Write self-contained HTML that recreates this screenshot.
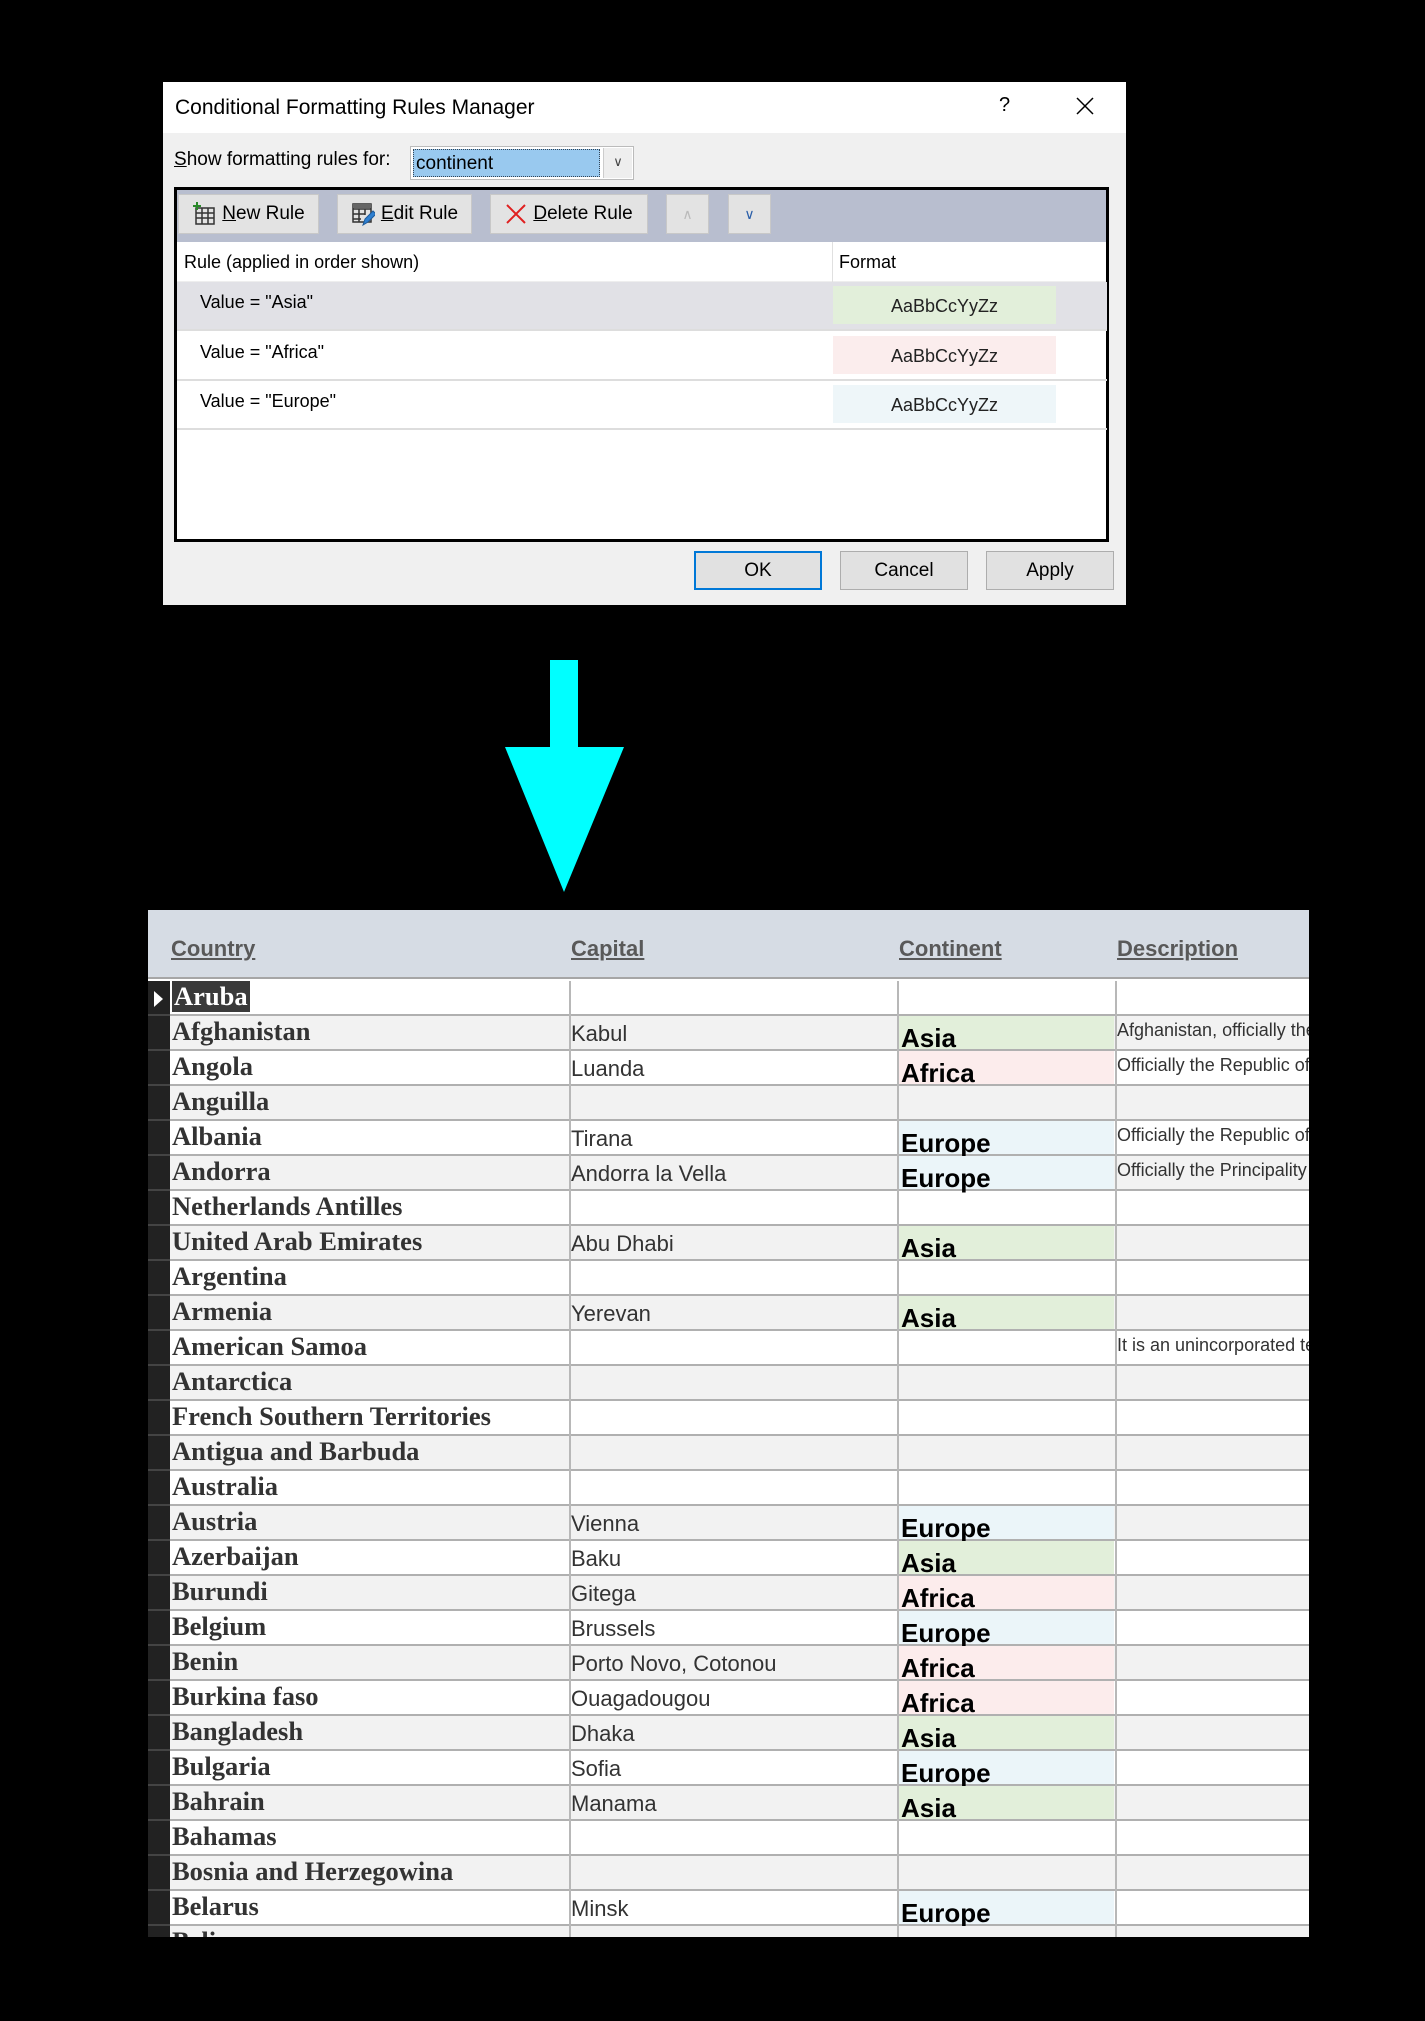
<!DOCTYPE html>
<html><head><meta charset="utf-8"><style>
*{margin:0;padding:0;box-sizing:border-box}
body{width:1425px;height:2021px;background:#000;position:relative;overflow:hidden;font-family:"Liberation Sans",sans-serif}
.abs{position:absolute}
#dlg{left:163px;top:82px;width:963px;height:523px;background:#f0f0f0}
#dlg .title{left:0;top:0;width:963px;height:51px;background:#fff;font-size:21px;color:#000;padding:14px 12px}
.btn{position:absolute;background:#e1e1e1;border:1px solid #adadad;font-size:19px;color:#000;display:flex;align-items:center;justify-content:center;gap:6px}
.tb{position:absolute;background:#e3e3e3;border:1px solid #c8c8c8;font-size:19px;color:#000;display:flex;align-items:center;justify-content:center;gap:6px;top:4px;height:40px}
.row{position:absolute;left:0;width:930px;height:49px;border-bottom:2px solid #ddd;font-size:18px;color:#000}
.row span{position:absolute;left:23px;top:10px}
.sw{position:absolute;left:657px;top:4px;width:223px;height:38px;font-size:18px;text-align:center;line-height:40px;color:#222}
#tbl{left:148px;top:910px;width:1161px;height:1027px;background:#fff;overflow:hidden}
.hd{position:absolute;top:0;left:0;width:1161px;height:69px;background:#d6dce4;border-bottom:2px solid #a6a6a6}
.hd span{position:absolute;top:26px;font-size:22px;font-weight:bold;color:#595959;text-decoration:underline}
.r{position:absolute;left:0;width:1161px;height:35px;border-bottom:2px solid #b0b0b0}
.r.g{background:#f2f2f2}
.rh{position:absolute;left:0;top:0;width:22px;height:35px;background:#222;border-bottom:2px solid #444}
.c1{position:absolute;left:24px;top:0;font-family:"Liberation Serif",serif;font-weight:bold;font-size:26.5px;color:#333;white-space:nowrap}
.c2{position:absolute;left:423px;top:5px;font-size:22px;color:#333}
.c3{position:absolute;left:751px;top:0;width:215px;height:33px;font-weight:bold;font-size:26px;color:#000;padding:3px 0 0 2px;line-height:38px}
.c4{position:absolute;left:969px;top:4px;font-size:18px;color:#333;white-space:nowrap}
.vl{position:absolute;top:71px;width:2px;height:960px;background:#b8b8b8}
.asia{background:#e2efda}.africa{background:#fcecec}.europe{background:#ebf5f9}
</style></head><body>
<div id="dlg" class="abs">
 <div class="abs title">Conditional Formatting Rules Manager</div>
 <div class="abs" style="left:836px;top:12px;font-size:20px">?</div>
 <svg class="abs" style="left:913px;top:15px" width="18" height="18"><path d="M1 1L17 17M17 1L1 17" stroke="#000" stroke-width="1.5"/></svg>
 <div class="abs" style="left:11px;top:67px;font-size:19px"><u>S</u>how formatting rules for:</div>
 <div class="abs" style="left:247px;top:64px;width:224px;height:34px;background:#fff;border:1px solid #bbb"></div>
 <div class="abs" style="left:250px;top:67px;width:187px;height:28px;background:#99c9ef;border:1px dotted #345;font-size:19px;padding:3px 2px">continent</div>
 <div class="abs" style="left:440px;top:66px;width:29px;height:30px;background:#eee;border-left:1px solid #ccc;font-size:13px;text-align:center;line-height:28px;color:#444">&#8744;</div>
 <div class="abs" style="left:11px;top:105px;width:935px;height:355px;border:3px solid #000;background:#fff">
  <div class="abs" style="left:0;top:0;width:929px;height:52px;background:#b8becf">
   <div class="tb" style="left:1px;width:141px"><svg width="24" height="24"><path d="M4 6h18v16H4zM4 11h18M4 16h18M10 6v16M16 6v16" stroke="#333" fill="none" stroke-width="1.5"/><path d="M5 0v8M1 4h8" stroke="#2a8a2a" stroke-width="2"/></svg><span><u>N</u>ew Rule</span></div>
   <div class="tb" style="left:160px;width:135px"><svg width="24" height="26"><path d="M2 3h18v18H2zM2 8h18M2 13h12M2 18h8M8 8v13M14 8v6" stroke="#333" fill="none" stroke-width="1.5"/><path d="M2 3h18v4H2z" fill="#666"/><path d="M12 24l2-6 8-8 3 3-8 8z" fill="#2f7fd0" stroke="#1c5a9a"/></svg><span><u>E</u>dit Rule</span></div>
   <div class="tb" style="left:313px;width:158px"><svg width="22" height="22"><path d="M2 2L20 20M20 2L2 20" stroke="#e02020" stroke-width="2"/></svg><span><u>D</u>elete Rule</span></div>
   <div class="tb" style="left:489px;width:43px;color:#bbb;font-size:14px">&#8743;</div>
   <div class="tb" style="left:551px;width:43px;color:#2a5ea8;font-size:14px">&#8744;</div>
  </div>
  <div class="abs" style="left:0;top:52px;width:929px;height:40px;border-bottom:1px solid #eee;font-size:18px">
   <span class="abs" style="left:7px;top:10px">Rule (applied in order shown)</span>
   <div class="abs" style="left:655px;top:0;width:1px;height:40px;background:#e0e0e0"></div>
   <span class="abs" style="left:662px;top:10px">Format</span>
  </div>
  <div class="row" style="top:92px;background:#e1e1e6"><span>Value = "Asia"</span><div class="sw asia" style="left:656px">AaBbCcYyZz</div></div>
  <div class="row" style="top:142px"><span>Value = "Africa"</span><div class="sw africa" style="left:656px;background:#fbeded">AaBbCcYyZz</div></div>
  <div class="row" style="top:191px"><span>Value = "Europe"</span><div class="sw europe" style="left:656px;background:#eef6f9">AaBbCcYyZz</div></div>
 </div>
 <div class="btn" style="left:531px;top:469px;width:128px;height:39px;border:2px solid #0078d7">OK</div>
 <div class="btn" style="left:677px;top:469px;width:128px;height:39px">Cancel</div>
 <div class="btn" style="left:823px;top:469px;width:128px;height:39px">Apply</div>
</div>
<svg class="abs" style="left:500px;top:655px" width="130" height="240"><path d="M50 5h28v87h46L64 237L5 92h45z" fill="#00ffff"/></svg>
<div id="tbl" class="abs">
 <div class="hd"><span style="left:23px">Country</span><span style="left:423px">Capital</span><span style="left:751px">Continent</span><span style="left:969px">Description</span></div>
 <div id="rows"></div>
 <div class="vl" style="left:421px"></div><div class="vl" style="left:749px"></div><div class="vl" style="left:967px"></div>
</div>
<script>
var d=[["Aruba"],["Afghanistan","Kabul","Asia","Afghanistan, officially the Islamic"],["Angola","Luanda","Africa","Officially the Republic of Angola"],["Anguilla"],["Albania","Tirana","Europe","Officially the Republic of Albania"],["Andorra","Andorra la Vella","Europe","Officially the Principality of Andorra"],["Netherlands Antilles"],["United Arab Emirates","Abu Dhabi","Asia"],["Argentina"],["Armenia","Yerevan","Asia"],["American Samoa","","","It is an unincorporated territory"],["Antarctica"],["French Southern Territories"],["Antigua and Barbuda"],["Australia"],["Austria","Vienna","Europe"],["Azerbaijan","Baku","Asia"],["Burundi","Gitega","Africa"],["Belgium","Brussels","Europe"],["Benin","Porto Novo, Cotonou","Africa"],["Burkina faso","Ouagadougou","Africa"],["Bangladesh","Dhaka","Asia"],["Bulgaria","Sofia","Europe"],["Bahrain","Manama","Asia"],["Bahamas"],["Bosnia and Herzegowina"],["Belarus","Minsk","Europe"],["Belize"]];
var h="";d.forEach(function(r,i){var t=71+i*35;h+='<div class="r'+(i%2?' g':'')+'" style="top:'+t+'px"><div class="rh"></div>';
if(i==0)h+='<div class="c1" style="background:#3a3a3a;color:#fff;padding:0 2px;left:24px">Aruba</div><div style="position:absolute;left:6px;top:10px;width:0;height:0;border-left:9px solid #fff;border-top:8px solid transparent;border-bottom:8px solid transparent"></div>';
else h+='<div class="c1">'+r[0]+'</div>';
if(r[1])h+='<div class="c2">'+r[1]+'</div>';
if(r[2])h+='<div class="c3 '+r[2].toLowerCase()+'">'+r[2]+'</div>';
if(r[3])h+='<div class="c4">'+r[3]+'</div>';
h+='</div>';});document.getElementById("rows").innerHTML=h;
</script>
</body></html>
